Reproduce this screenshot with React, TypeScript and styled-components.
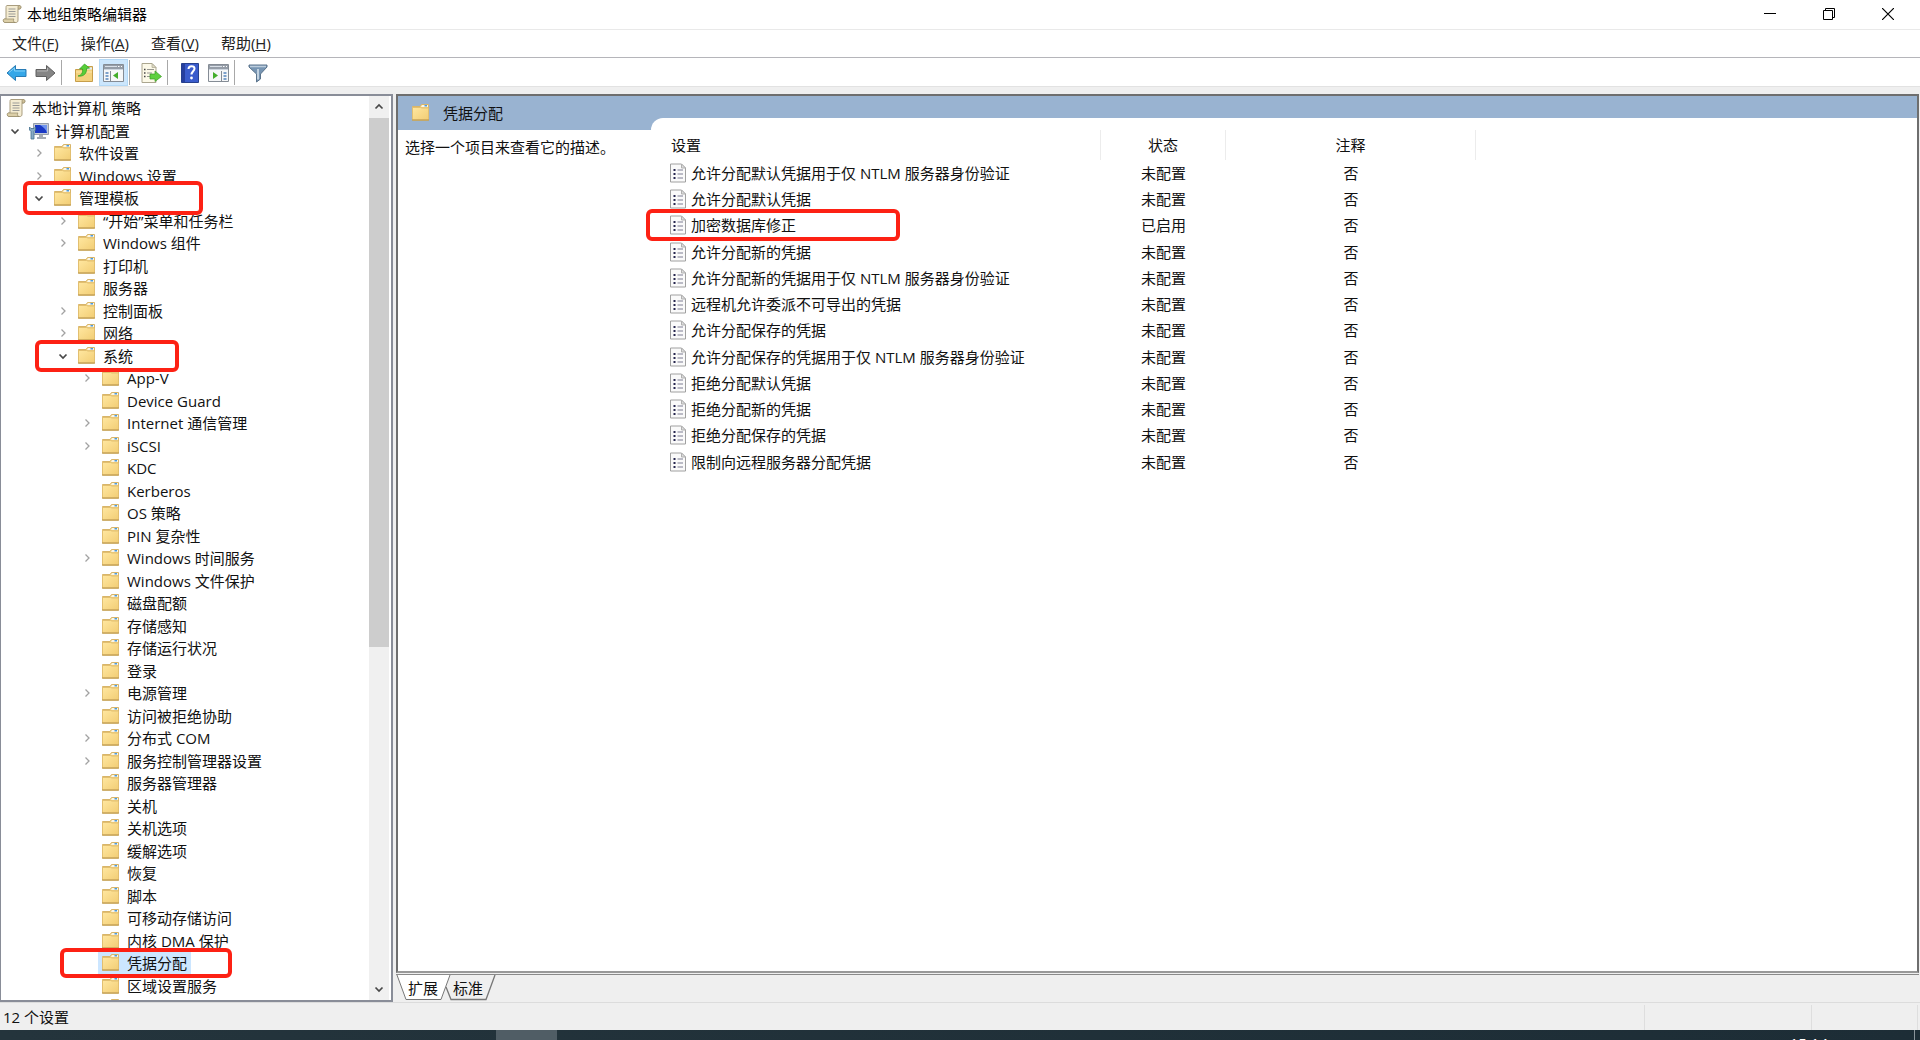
import React from "react";
import styled, { createGlobalStyle, css } from "styled-components";

const GlobalStyle = createGlobalStyle`
  *, *::before, *::after { box-sizing: border-box; }
  html, body { margin: 0; padding: 0; }
  body {
    font: 15px/22px "Open Sans", "Noto Sans CJK SC", sans-serif;
    color: #111;
    background: #efefef;
    overflow: hidden;
  }
  button { font: inherit; color: inherit; background: none; border: 0; padding: 0; margin: 0; }
  svg { display: block; flex: none; }
`;

const Page = styled.div`
  display: flex;
  flex-direction: column;
  height: 100vh;
  background: #efefef;
`;

const TitleBar = styled.header`
  display: flex;
  align-items: center;
  height: 29px;
  flex: none;
  padding: 0 5px 2px 2px;
  gap: 5px;
  background: #fff;
`;

const WindowTitle = styled.h1`
  margin: 0;
  flex: 1;
  font-size: 15px;
  font-weight: 400;
  color: #000;
`;

const CaptionButton = styled.button`
  display: flex;
  align-items: center;
  justify-content: center;
  width: 54px;
  height: 27px;
`;

const MenuBar = styled.nav`
  display: flex;
  align-items: center;
  height: 29px;
  flex: none;
  padding: 0 0 2px 1px;
  background: #fff;
  border-top: 1px solid #e9e9e9;
  border-bottom: 1px solid #b5b5ba;
`;

const MenuButton = styled.button`
  padding: 0 11px;
  color: #222;
`;

const Toolbar = styled.div`
  display: flex;
  align-items: center;
  height: 28px;
  flex: none;
  padding: 1px 0 0 2px;
  background: #fff;
`;

const ToolButton = styled.button<{ $active?: boolean }>`
  display: flex;
  align-items: center;
  justify-content: center;
  width: 29px;
  height: 27px;
  ${(p) =>
    p.$active &&
    css`
      background: #cce6fc;
      border: 1px solid #b4d9f6;
    `}
`;

const Separator = styled.span<{ $after?: number }>`
  width: 1px;
  height: 25px;
  margin-left: 1px;
  margin-right: ${(p) => p.$after ?? 7}px;
  background: #a8a8a8;
`;

const Main = styled.main`
  display: grid;
  grid-template-columns: 393px minmax(0, 1fr);
  gap: 3px;
  flex: 1;
  min-height: 0;
  padding-top: 7px;
  border-top: 1px solid #e2e2e2;
`;

const TreePanel = styled.section`
  display: flex;
  min-height: 0;
  background: #fff;
  border: 2px solid #898d98;
  border-left-width: 1px;
`;

const Tree = styled.ul`
  flex: 1;
  min-width: 0;
  margin: 0;
  padding: 1px 0 0;
  list-style: none;
  overflow: hidden;
`;

const TreeRow = styled.li<{ $level: number }>`
  position: relative;
  display: flex;
  align-items: center;
  height: 22px;
  padding-left: ${(p) => (p.$level === 0 ? 2 : p.$level * 24 - 18)}px;
  white-space: nowrap;

  &:nth-child(even) {
    height: 23px;
  }
`;

const Toggle = styled.button`
  display: flex;
  justify-content: center;
  width: 16px;
  margin-right: 3px;
`;

const TogglePlaceholder = styled.span`
  width: 19px;
`;

const TreeLabel = styled.span<{ $selected?: boolean }>`
  display: flex;
  align-items: center;
  gap: 6px;
  height: 100%;
  padding: 0 4px 0 3px;
  background: ${(p) => (p.$selected ? "#cce6ff" : "transparent")};
`;

const Highlight = styled.span<{ $left: number; $width: number; $height: number }>`
  position: absolute;
  z-index: 2;
  top: 50%;
  left: ${(p) => p.$left}px;
  width: ${(p) => p.$width}px;
  height: ${(p) => p.$height}px;
  transform: translateY(-50%);
  border: 4px solid #fd2114;
  border-radius: 6px;
  pointer-events: none;
`;

const ScrollBar = styled.div`
  display: flex;
  flex-direction: column;
  width: 22px;
  flex: none;
  background: #f0f0f0;
  border-right: 2px solid #fff;
`;

const ScrollButton = styled.button`
  display: flex;
  align-items: center;
  justify-content: center;
  height: 22px;
`;

const ScrollTrack = styled.div`
  display: grid;
  grid-template-rows: 8fr 5fr;
  flex: 1;
`;

const ScrollThumb = styled.div`
  background: #cdcdcd;
`;

const Details = styled.section`
  display: flex;
  flex-direction: column;
  min-height: 0;
  margin-right: 1px;
`;

const DetailsFrame = styled.div`
  display: grid;
  grid-template-columns: 253px minmax(0, 1fr);
  flex: 1;
  min-height: 0;
  background: #fff;
  border: 2px solid #6e6e6e;
  border-bottom-color: #999;
`;

const Summary = styled.div``;

const SummaryTitle = styled.h2`
  display: flex;
  align-items: center;
  gap: 12px;
  height: 34px;
  margin: 0;
  padding: 0 0 0 13px;
  font-size: 15px;
  font-weight: 400;
  background: #99b3d1;
`;

const SummaryText = styled.p`
  margin: 0;
  padding: 6px 7px;
`;

const Listing = styled.div`
  background: linear-gradient(#99b3d1 34px, #fff 34px);
  padding-top: 22px;
`;

const ListingSheet = styled.div`
  height: 100%;
  padding-top: 12px;
  background: #fff;
  border-top-left-radius: 12px;
`;

const Table = styled.table`
  width: 100%;
  table-layout: fixed;
  border-collapse: separate;
  border-spacing: 0;
`;

const Col = styled.col<{ $width?: number }>`
  width: ${(p) => (p.$width ? `${p.$width}px` : "auto")};
`;

const HeadCell = styled.th<{ $first?: boolean }>`
  height: 30px;
  padding: ${(p) => (p.$first ? "0 0 0 20px" : "0")};
  font-weight: 400;
  text-align: ${(p) => (p.$first ? "left" : "center")};
  border-right: 1px solid #ececec;
`;

const BodyRow = styled.tr`
  height: 26px;

  &:nth-child(4n) {
    height: 27px;
  }
`;

const Cell = styled.td`
  padding: 0;
  text-align: center;
`;

const NameCell = styled.td`
  position: relative;
  padding: 0 0 0 19px;
`;

const SettingName = styled.span`
  display: flex;
  align-items: center;
  gap: 5px;
  white-space: nowrap;
`;

const ViewTabs = styled.div`
  display: flex;
  height: 28px;
  flex: none;
  margin-top: 1px;
  border-top: 1px solid #8a8a8a;
`;

const ViewTab = styled.button`
  position: relative;
  width: 45px;
  height: 26px;
  padding-left: 12px;
  text-align: left;
  white-space: nowrap;
`;

const TabShape = styled.svg`
  position: absolute;
  z-index: -1;
  top: 0;
  left: 0;
`;

const TabLayer = styled.div`
  position: relative;
  z-index: 0;
  display: flex;
`;

const StatusBar = styled.footer`
  display: flex;
  height: 28px;
  flex: none;
  border-top: 1px solid #dcdcdc;
  padding: 2px 2px 0 0;
`;

const StatusText = styled.span`
  flex: 1;
  padding-left: 3px;
  line-height: 24px;
`;

const StatusPart = styled.span<{ $width: number }>`
  width: ${(p) => p.$width}px;
  border-left: 1px solid #dedede;
`;

const StatusEnd = styled.span`
  width: 1px;
  background: #dedede;
`;

const Taskbar = styled.div`
  display: flex;
  height: 10px;
  flex: none;
  padding: 0 5px 0 496px;
  justify-content: space-between;
  overflow: hidden;
  background: linear-gradient(90deg, #24343c, #1d2d36);
`;

const TaskItem = styled.span`
  width: 61px;
  background: #505d65;
`;

const Clock = styled.time`
  padding: 2px 86px 0 0;
  color: #fff;
  border-right: 1px solid #8a949a;
`;

const ScrollIcon = ({ size = 20 }: { size?: number }) => (
  <svg width={size} height={size} viewBox="0 0 20 20" aria-hidden="true">
    <path d="M5 1.5h12c2 0 2.5 3.5.5 3.5H16v11c0 2-1 2.500-2 2.500H3c-2 0-2-3.500 0-3.500h1V3.500C4 2.500 4.300 1.500 5 1.500z" fill="#f4ecd2" stroke="#a99d7f" />
    <path d="M16 5V3c0-2 3-2 3 0s-1 2-3 2z" fill="#cfc098" stroke="#958968" strokeWidth=".7" />
    <path d="M2 15h10c-1 1-1 3 1 3.500H3c-2 0-2.500-3-1-3.500z" fill="#dccfa8" stroke="#958968" strokeWidth=".7" />
    <path d="M6.500 5h7M6.500 7.500h7M6.500 10h7M6.500 12.500h7" stroke="#9b9b98" strokeWidth="1.100" />
  </svg>
);

const FolderIcon = () => (
  <svg width="20" height="20" viewBox="0 0 20 20" aria-hidden="true">
    <defs>
      <linearGradient id="folderFace" x1="0" y1="0" x2="1" y2="1">
        <stop offset="0" stopColor="#ffe7a0" />
        <stop offset="1" stopColor="#f2cd74" />
      </linearGradient>
    </defs>
    <path d="M1.500 3.500h7.500l1.500-2h7v15.500h-16z" fill="#efcf80" stroke="#d8b56a" />
    <path d="M11 2h6v2h-7z" fill="#fbf6e4" />
    <path d="M13.500 2h2.500v1.500h-2.500z" fill="#4b9be0" />
    <path d="M1.500 4.500h8l1.500 .500h6.500v12h-16z" fill="url(#folderFace)" stroke="#e2bf70" />
    <path d="M1 17h17" stroke="#b8954c" />
  </svg>
);

const ComputerIcon = () => (
  <svg width="20" height="20" viewBox="0 0 20 20" aria-hidden="true">
    <path d="M4.500 2.500h15v11h-15z" fill="#c5ccd6" stroke="#959dab" />
    <path d="M6 4h12v8H6z" fill="#1b39c4" />
    <path d="M11 4h7v8c-1-4-4-6-7-8z" fill="#6f93ee" />
    <path d="M10 14h4v2h3v2H8v-2h2z" fill="#a5abb3" />
    <path d="M.500 6v3l1.500 1.500v7.500h3v-7.500L6.500 9V6L5 7.500H2z" fill="#88aac6" stroke="#45718f" strokeWidth=".8" />
  </svg>
);

const PolicyIcon = () => (
  <svg width="16" height="20" viewBox="0 0 16 20" aria-hidden="true">
    <path d="M.500 1h11l4 4v14H.500z" fill="#fafafa" stroke="#a0a0a0" />
    <path d="M11.500 1v4h4z" fill="#dedede" stroke="#b0b0b0" />
    <path d="M3.500 6h2v2h-2zM3.500 10h2v2h-2zM3.500 14h2v2h-2z" fill="#26264e" />
    <path d="M7.500 7H13M7.500 11H13M7.500 15H13" stroke="#7c7c92" strokeWidth="1.200" />
  </svg>
);

const Chevron = ({ dir }: { dir: "right" | "down" | "up" }) => {
  const paths = {
    right: "M3.500 1.500L7 5L3.500 8.500",
    down: "M1.500 3.500L5 7L8.500 3.500",
    up: "M1.500 6.500L5 3L8.500 6.500",
  };
  return (
    <svg width="10" height="10" viewBox="0 0 10 10" aria-hidden="true">
      <path d={paths[dir]} fill="none" stroke={dir === "right" ? "#a2a2a2" : "#484848"} strokeWidth={dir === "right" ? 1.3 : 1.7} />
    </svg>
  );
};

const ArrowIcon = ({ forward }: { forward?: boolean }) => (
  <svg width="21" height="18" viewBox="0 0 21 18" aria-hidden="true">
    <path
      d={forward ? "M20 9l-8.500-7.500v4H1v7h10.500v4z" : "M1 9l8.500-7.500v4H20v7H9.500v4z"}
      fill={forward ? "#858585" : "#35a7e8"}
      stroke={forward ? "#606060" : "#287bb5"}
      strokeLinejoin="round"
    />
    <path d={forward ? "M2 7h10.500V4" : "M3 8.500L8.500 4v3H19"} fill="none" stroke={forward ? "#b4b4b4" : "#83d1f8"} />
  </svg>
);

const FolderUpIcon = () => (
  <svg width="19" height="20" viewBox="0 0 19 20" aria-hidden="true">
    <path d="M.500 6.500h9l2-3h6v15H.500z" fill="#f3d17e" stroke="#c79e4a" />
    <path d="M12 4.500h5v2h-5z" fill="#dfeefa" />
    <path d="M1 9h16" stroke="#fbe5aa" />
    <path d="M3 13c4-1 5-4 4.500-7H4.500l5-5 5 4-3 .500C12 10 9 14 3 13z" fill="#57cf38" stroke="#2f9b22" strokeWidth=".7" />
  </svg>
);

const PaneIcon = ({ mirrored }: { mirrored?: boolean }) => (
  <svg width="21" height="18" viewBox="0 0 21 18" aria-hidden="true">
    <path d="M.500.500h20v17H.500z" fill="#f6f7f8" stroke="#858c95" />
    <path d="M1 1h19v4H1z" fill="#959da8" />
    <path d="M2 2.500h12" stroke="#dae0e8" />
    <path d="M15 2.500h1.500M18 2.500h1" stroke="#fff" />
    <path d="M1 5.500h19" stroke="#cdd5df" />
    <path d={mirrored ? "M13.500 7v10" : "M7.500 7v10"} stroke="#858c95" />
    <path d={mirrored ? "M15.500 9h3M15.500 12h3M15.500 15h3" : "M2.500 9h3M2.500 12h3M2.500 15h3"} stroke="#5685bc" strokeWidth="1.300" />
    <path d={mirrored ? "M5 8l5 3.500L5 15z" : "M15 8l-5 3.500 5 3.500z"} fill="#43ad2a" />
  </svg>
);

const ExportIcon = () => (
  <svg width="21" height="20" viewBox="0 0 21 20" aria-hidden="true">
    <path d="M1 .500h10l4 4v15H1z" fill="#fcf9e8" stroke="#aba68f" />
    <path d="M11 .500v4h4z" fill="#dfdac4" stroke="#aba68f" strokeWidth=".7" />
    <path d="M3 6.500h1.500M3 10h1.500M3 13.500h1.500" stroke="#444" strokeWidth="1.300" />
    <path d="M6 6.500h7M6 10h5M6 13.500h4" stroke="#96968f" strokeWidth="1.200" />
    <path d="M9 11h5V8l6.500 5.500L14 18.500V16H9z" fill="#5fd03d" stroke="#3d9b26" strokeWidth=".7" />
  </svg>
);

const HelpIcon = () => (
  <svg width="18" height="20" viewBox="0 0 18 20" aria-hidden="true">
    <path d="M.500.500h17v19H.500z" fill="#3a5ccc" stroke="#26408e" />
    <path d="M1 1h3v18H1z" fill="#263f9e" />
    <path d="M7.500 6c0-4 6-3.500 6-.500 0 2.500-3 3-3 6" fill="none" stroke="#fff" strokeWidth="2" />
    <circle cx="10.500" cy="15" r="1.400" fill="#fff" />
  </svg>
);

const FilterIcon = () => (
  <svg width="20" height="20" viewBox="0 0 20 20" aria-hidden="true">
    <path d="M1 2h18v2l-6.500 7v5l-4 3v-8L1 4z" fill="#7795b3" stroke="#5a738b" strokeLinejoin="round" />
    <path d="M2 3.500h16" stroke="#bccddd" strokeWidth="1.500" />
    <path d="M10 6v10.500" stroke="#dce8f1" strokeWidth="1.500" />
  </svg>
);

type Mark = { left: number; width: number; height: number };
type Node = {
  level: number;
  text: string;
  state?: "open" | "closed";
  icon?: "scroll" | "computer";
  selected?: boolean;
  mark?: Mark;
};

const leaf = (level: number, text: string): Node => ({ level, text });
const closed = (level: number, text: string): Node => ({ level, text, state: "closed" });

const nodes: Node[] = [
  { level: 0, text: "本地计算机 策略", icon: "scroll" },
  { level: 1, text: "计算机配置", icon: "computer", state: "open" },
  closed(2, "软件设置"),
  closed(2, "Windows 设置"),
  { level: 2, text: "管理模板", state: "open", mark: { left: 22, width: 180, height: 34 } },
  closed(3, "“开始”菜单和任务栏"),
  closed(3, "Windows 组件"),
  leaf(3, "打印机"),
  leaf(3, "服务器"),
  closed(3, "控制面板"),
  closed(3, "网络"),
  { level: 3, text: "系统", state: "open", mark: { left: 34, width: 144, height: 32 } },
  closed(4, "App-V"),
  leaf(4, "Device Guard"),
  closed(4, "Internet 通信管理"),
  closed(4, "iSCSI"),
  leaf(4, "KDC"),
  leaf(4, "Kerberos"),
  leaf(4, "OS 策略"),
  leaf(4, "PIN 复杂性"),
  closed(4, "Windows 时间服务"),
  leaf(4, "Windows 文件保护"),
  leaf(4, "磁盘配额"),
  leaf(4, "存储感知"),
  leaf(4, "存储运行状况"),
  leaf(4, "登录"),
  closed(4, "电源管理"),
  leaf(4, "访问被拒绝协助"),
  closed(4, "分布式 COM"),
  closed(4, "服务控制管理器设置"),
  leaf(4, "服务器管理器"),
  leaf(4, "关机"),
  leaf(4, "关机选项"),
  leaf(4, "缓解选项"),
  leaf(4, "恢复"),
  leaf(4, "脚本"),
  leaf(4, "可移动存储访问"),
  leaf(4, "内核 DMA 保护"),
  { level: 4, text: "凭据分配", selected: true, mark: { left: 59, width: 172, height: 30 } },
  leaf(4, "区域设置服务"),
  leaf(4, ""),
];

const settings: { name: string; enabled?: boolean; mark?: Mark }[] = [
  { name: "允许分配默认凭据用于仅 NTLM 服务器身份验证" },
  { name: "允许分配默认凭据" },
  { name: "加密数据库修正", enabled: true, mark: { left: -5, width: 254, height: 32 } },
  { name: "允许分配新的凭据" },
  { name: "允许分配新的凭据用于仅 NTLM 服务器身份验证" },
  { name: "远程机允许委派不可导出的凭据" },
  { name: "允许分配保存的凭据" },
  { name: "允许分配保存的凭据用于仅 NTLM 服务器身份验证" },
  { name: "拒绝分配默认凭据" },
  { name: "拒绝分配新的凭据" },
  { name: "拒绝分配保存的凭据" },
  { name: "限制向远程服务器分配凭据" },
];

const menus = [
  ["文件", "F"],
  ["操作", "A"],
  ["查看", "V"],
  ["帮助", "H"],
];

const MarkBox = ({ mark }: { mark?: Mark }) =>
  mark ? <Highlight $left={mark.left} $width={mark.width} $height={mark.height} /> : null;

const TreeItem = ({ node }: { node: Node }) => (
  <TreeRow $level={node.level} role="treeitem" aria-level={node.level + 1} aria-selected={!!node.selected}>
    {node.state ? (
      <Toggle aria-label={node.text}>
        <Chevron dir={node.state === "open" ? "down" : "right"} />
      </Toggle>
    ) : (
      node.level > 0 && <TogglePlaceholder />
    )}
    <TreeLabel $selected={node.selected}>
      {node.icon === "scroll" ? <ScrollIcon /> : node.icon === "computer" ? <ComputerIcon /> : <FolderIcon />}
      {node.text}
    </TreeLabel>
    <MarkBox mark={node.mark} />
  </TreeRow>
);

export default function App() {
  return (
    <Page>
      <GlobalStyle />
      <TitleBar>
        <ScrollIcon />
        <WindowTitle>本地组策略编辑器</WindowTitle>
        <CaptionButton aria-label="最小化">
          <svg width="12" height="12" viewBox="0 0 12 12"><path d="M0 5.500h12" stroke="#000" /></svg>
        </CaptionButton>
        <CaptionButton aria-label="还原">
          <svg width="12" height="12" viewBox="0 0 12 12" fill="none" stroke="#000">
            <path d="M.500 2.500h9v9h-9zM2.500 2.500v-2h9v9h-2" />
          </svg>
        </CaptionButton>
        <CaptionButton aria-label="关闭">
          <svg width="12" height="12" viewBox="0 0 12 12"><path d="M0 0l12 12M12 0L0 12" stroke="#000" strokeWidth="1.200" /></svg>
        </CaptionButton>
      </TitleBar>

      <MenuBar>
        {menus.map(([label, key]) => (
          <MenuButton key={key}>
            {label}(<u>{key}</u>)
          </MenuButton>
        ))}
      </MenuBar>

      <Toolbar>
        <ToolButton aria-label="后退"><ArrowIcon /></ToolButton>
        <ToolButton aria-label="前进"><ArrowIcon forward /></ToolButton>
        <Separator $after={8} />
        <ToolButton aria-label="上一级"><FolderUpIcon /></ToolButton>
        <ToolButton aria-label="显示/隐藏控制台树" $active><PaneIcon /></ToolButton>
        <Separator />
        <ToolButton aria-label="导出列表"><ExportIcon /></ToolButton>
        <Separator />
        <ToolButton aria-label="帮助"><HelpIcon /></ToolButton>
        <ToolButton aria-label="显示/隐藏操作窗格"><PaneIcon mirrored /></ToolButton>
        <Separator $after={8} />
        <ToolButton aria-label="筛选器"><FilterIcon /></ToolButton>
      </Toolbar>

      <Main>
        <TreePanel>
          <Tree role="tree">
            {nodes.map((node, i) => (
              <TreeItem key={i} node={node} />
            ))}
          </Tree>
          <ScrollBar>
            <ScrollButton aria-label="向上滚动"><Chevron dir="up" /></ScrollButton>
            <ScrollTrack><ScrollThumb /></ScrollTrack>
            <ScrollButton aria-label="向下滚动"><Chevron dir="down" /></ScrollButton>
          </ScrollBar>
        </TreePanel>

        <Details>
          <DetailsFrame>
            <Summary>
              <SummaryTitle><FolderIcon />凭据分配</SummaryTitle>
              <SummaryText>选择一个项目来查看它的描述。</SummaryText>
            </Summary>
            <Listing>
              <ListingSheet>
                <Table>
                  <colgroup>
                    <Col $width={450} />
                    <Col $width={125} />
                    <Col $width={250} />
                    <Col />
                  </colgroup>
                  <thead>
                    <tr>
                      <HeadCell $first scope="col">设置</HeadCell>
                      <HeadCell scope="col">状态</HeadCell>
                      <HeadCell scope="col">注释</HeadCell>
                      <td />
                    </tr>
                  </thead>
                  <tbody>
                    {settings.map((s) => (
                      <BodyRow key={s.name}>
                        <NameCell>
                          <SettingName><PolicyIcon />{s.name}</SettingName>
                          <MarkBox mark={s.mark} />
                        </NameCell>
                        <Cell>{s.enabled ? "已启用" : "未配置"}</Cell>
                        <Cell>否</Cell>
                        <td />
                      </BodyRow>
                    ))}
                  </tbody>
                </Table>
              </ListingSheet>
            </Listing>
          </DetailsFrame>
          <ViewTabs>
            <TabLayer>
              <ViewTab>
                <TabShape width="56" height="26" viewBox="0 0 56 26" aria-hidden="true">
                  <path d="M1 0l9 24.500h35L54 0z" fill="#fff" />
                  <path d="M1 0l9 24.500h35L54 0" fill="none" stroke="#777" />
                </TabShape>
                扩展
              </ViewTab>
              <ViewTab>
                <TabShape width="56" height="26" viewBox="0 0 56 26" aria-hidden="true">
                  <path d="M5 12l5 12.500h35L54 0" fill="none" stroke="#777" strokeWidth="1.300" />
                </TabShape>
                标准
              </ViewTab>
            </TabLayer>
          </ViewTabs>
        </Details>
      </Main>

      <StatusBar>
        <StatusText>12 个设置</StatusText>
        <StatusPart $width={167} />
        <StatusPart $width={106} />
        <StatusEnd />
      </StatusBar>

      <Taskbar>
        <TaskItem />
        <Clock>15:14</Clock>
      </Taskbar>
    </Page>
  );
}
